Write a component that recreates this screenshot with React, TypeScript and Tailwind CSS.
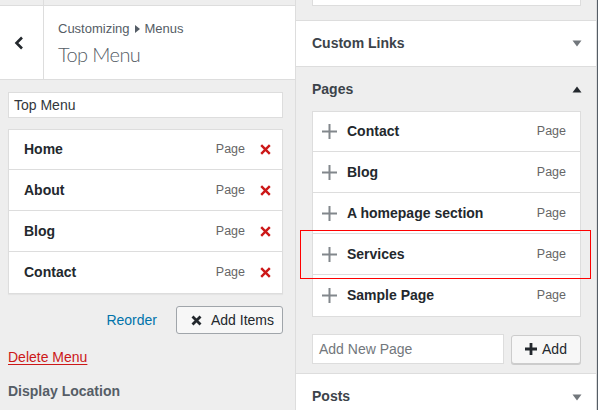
import React from 'react';

const menuItems = ['Home', 'About', 'Blog', 'Contact'];
const pages = ['Contact', 'Blog', 'A homepage section', 'Services', 'Sample Page'];

function RemoveIcon() {
  return (
    <svg width="11" height="11" viewBox="0 0 11 11" className="shrink-0">
      <path d="M1.2 1.2 L9.8 9.8 M9.8 1.2 L1.2 9.8" stroke="#cc1818" strokeWidth="2.4" />
    </svg>
  );
}

function PlusIcon() {
  return (
    <svg width="15" height="15" viewBox="0 0 15 15" className="shrink-0">
      <path d="M7.5 0 V15 M0 7.5 H15" stroke="#82878c" strokeWidth="2" />
    </svg>
  );
}

function Caret({ up, color }: { up?: boolean; color: string }) {
  return (
    <svg width="10" height="7" viewBox="0 0 10 7">
      <path d={up ? 'M0.5 6.5 L5 0.5 L9.5 6.5 Z' : 'M0.5 0.5 L9.5 0.5 L5 6.5 Z'} fill={color} />
    </svg>
  );
}

function LeftPanel() {
  return (
    <div className="w-[296px] shrink-0 flex flex-col bg-[#eeeeee] border-r border-[#dddddd]">
      <div className="flex h-[80px] border-b border-[#dddddd]">
        <div className="w-[44px] flex flex-col border-r border-[#dddddd]">
          <div className="h-[6px] border-b border-[#dddddd] bg-[#eeeeee]" />
          <div className="flex-1 bg-white flex items-center justify-center pr-[5px]">
            <svg width="10" height="14" viewBox="0 0 10 14">
              <path d="M8 1.5 L2.5 7 L8 12.5" stroke="#23282d" strokeWidth="2.6" fill="none" />
            </svg>
          </div>
        </div>
        <div className="flex-1 flex flex-col">
          <div className="h-[6px] border-b border-[#dddddd] bg-[#eeeeee]" />
          <div className="flex-1 bg-white pl-[14px] pt-[13px]">
            <div className="flex items-center text-[13px] leading-[20px] text-[#555d66]">
              <span>Customizing</span>
              <svg width="5" height="8" viewBox="0 0 5 8" className="mx-[5px]">
                <path d="M0 0 L5 4 L0 8 Z" fill="#555d66" />
              </svg>
              <span>Menus</span>
            </div>
            <div className="mt-[3px] text-[20px] leading-[24px] font-light tracking-[-0.6px] text-[#555d66] font-['Lato',sans-serif]">
              Top Menu
            </div>
          </div>
        </div>
      </div>

      <div className="pl-[8px] pr-[12px]">
        <div className="mt-[12px] h-[26px] bg-white border border-[#dddddd] flex items-center pl-[5px] text-[14px] text-[#32373c]">
          Top Menu
        </div>

        <div className="mt-[11px] bg-white border border-[#dddddd] divide-y divide-[#dddddd] shadow-[0_1px_1px_rgba(0,0,0,0.04)]">
          {menuItems.map((item) => (
            <div key={item} className="h-[41px] first:h-[40px] flex items-center pl-[15px] pr-[11px]">
              <span className="flex-1 text-[14px] font-bold text-[#23282d]">{item}</span>
              <span className="text-[12.5px] text-[#666666] mr-[15px]">Page</span>
              <RemoveIcon />
            </div>
          ))}
        </div>

        <div className="mt-[12px] flex items-center justify-end gap-[19px]">
          <span className="text-[14px] text-[#0073aa]">Reorder</span>
          <div className="w-[107px] h-[28px] rounded-[3px] border border-[#a0a5aa] bg-[#f7f7f7] flex items-center pl-[14px] gap-[9px] text-[14px] text-[#23282d]">
            <svg width="11" height="11" viewBox="0 0 11 11">
              <path d="M1.5 1.5 L9.5 9.5 M9.5 1.5 L1.5 9.5" stroke="#23282d" strokeWidth="2.8" />
            </svg>
            <span>Add Items</span>
          </div>
        </div>

        <div className="mt-[13px] text-[14px] leading-[20px] text-[#cc1818] underline underline-offset-[2px]">
          Delete Menu
        </div>
        <div className="mt-[14px] text-[14px] leading-[20px] font-bold text-[#555d66]">Display Location</div>
      </div>
    </div>
  );
}

function RightPanel() {
  return (
    <div className="relative flex-1 flex flex-col bg-[#eeeeee] border-r border-[#555d66]">
      <div className="flex-1 flex flex-col border-r border-[#dddddd]">
        <div className="ml-[16px] mr-[15px] h-[6px] bg-white border-x border-b border-[#dddddd]" />

        <div className="mt-[14px] h-[47px] bg-white border-y border-[#dddddd] flex items-center pl-[16px] pr-[14px]">
          <span className="flex-1 text-[14px] font-bold text-[#3c434a]">Custom Links</span>
          <Caret color="#72777c" />
        </div>

        <div className="h-[44px] flex items-center pl-[16px] pr-[14px]">
          <span className="flex-1 text-[14px] font-bold text-[#3c434a]">Pages</span>
          <Caret up color="#23282d" />
        </div>

        <div className="ml-[16px] mr-[15px] bg-white border border-[#dddddd] divide-y divide-[#dddddd]">
          {pages.map((p) => (
            <div key={p} className="h-[41px] first:h-[40px] flex items-center pl-[9px] pr-[14px]">
              <PlusIcon />
              <span className="flex-1 ml-[10px] text-[14px] font-bold text-[#23282d]">{p}</span>
              <span className="text-[12.5px] text-[#666666]">Page</span>
            </div>
          ))}
        </div>

        <div className="mt-[17px] ml-[16px] mr-[15px] flex items-center justify-between">
          <div className="w-[192px] h-[30px] bg-white border border-[#dddddd] flex items-center pl-[6px] text-[14px] text-[#72777c]">
            Add New Page
          </div>
          <div className="w-[70px] h-[29px] rounded-[3px] border border-[#cccccc] bg-[#f7f7f7] shadow-[0_1px_0_#cccccc] flex items-center justify-center gap-[5px] text-[14px] text-[#23282d]">
            <svg width="12" height="12" viewBox="0 0 12 12">
              <path d="M6 0 V12 M0 6 H12" stroke="#23282d" strokeWidth="2.8" />
            </svg>
            <span>Add</span>
          </div>
        </div>

        <div className="mt-[9px] flex-1 bg-white border-t border-[#dddddd] flex items-start pt-[12px] pl-[16px] pr-[14px]">
          <span className="flex-1 text-[14px] leading-[20px] font-bold text-[#3c434a]">Posts</span>
          <div className="pt-[8px]">
            <Caret color="#72777c" />
          </div>
        </div>
      </div>

      <div className="absolute left-[4px] top-[230px] w-[291px] h-[49px] border border-[#ff0000]" />
    </div>
  );
}

export default function App() {
  return (
    <div className="w-[598px] h-[410px] overflow-hidden flex font-['Liberation_Sans',Arial,sans-serif]">
      <LeftPanel />
      <RightPanel />
    </div>
  );
}
